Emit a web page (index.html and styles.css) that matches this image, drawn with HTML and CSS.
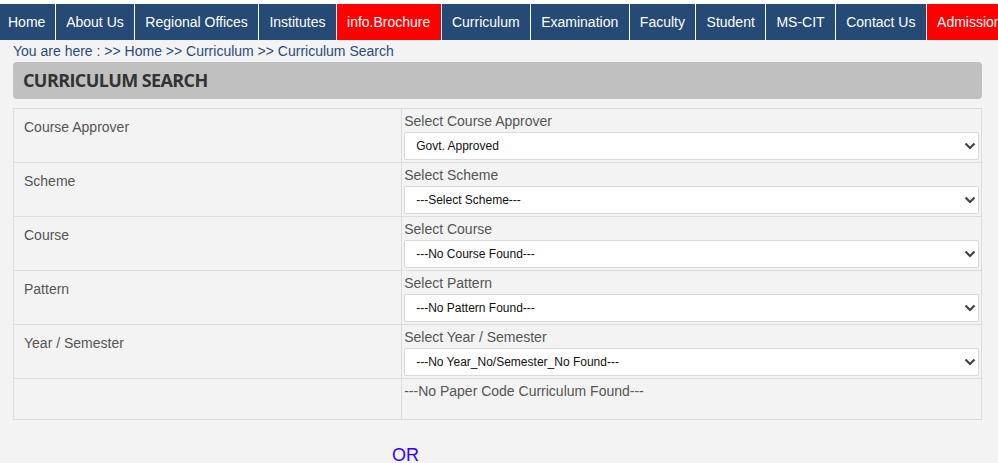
FILE: index.html
```html
<!DOCTYPE html>
<html lang="en">
<head>
<meta charset="utf-8">
<title>Curriculum Search</title>
<link rel="stylesheet" href="styles.css">
</head>
<body>
<div class="top">
  <nav class="nav">
    <a class="nav-item">Home</a>
    <a class="nav-item">About Us</a>
    <a class="nav-item">Regional Offices</a>
    <a class="nav-item">Institutes</a>
    <a class="nav-item nav-red">info.Brochure</a>
    <a class="nav-item">Curriculum</a>
    <a class="nav-item">Examination</a>
    <a class="nav-item">Faculty</a>
    <a class="nav-item">Student</a>
    <a class="nav-item">MS-CIT</a>
    <a class="nav-item">Contact Us</a>
    <a class="nav-item nav-red">Admission</a>
  </nav>
</div>
<main class="content">
  <div class="crumbs">You are here : &gt;&gt; Home &gt;&gt; Curriculum &gt;&gt; Curriculum Search</div>
  <h1 class="heading">CURRICULUM SEARCH</h1>
  <table class="form-table">
    <tr>
      <td class="cell-label">Course Approver</td>
      <td class="cell-field">
        <div class="field-label">Select Course Approver</div>
        <div class="select-wrap">
          <select class="select"><option>Govt. Approved</option></select>
          <svg class="chev" width="12" height="8" viewBox="0 0 12 8"><path d="M1.5 1.5 L6 6 L10.5 1.5" fill="none" stroke="#444" stroke-width="2.2"/></svg>
        </div>
      </td>
    </tr>
    <tr>
      <td class="cell-label">Scheme</td>
      <td class="cell-field">
        <div class="field-label">Select Scheme</div>
        <div class="select-wrap">
          <select class="select"><option>---Select Scheme---</option></select>
          <svg class="chev" width="12" height="8" viewBox="0 0 12 8"><path d="M1.5 1.5 L6 6 L10.5 1.5" fill="none" stroke="#444" stroke-width="2.2"/></svg>
        </div>
      </td>
    </tr>
    <tr>
      <td class="cell-label">Course</td>
      <td class="cell-field">
        <div class="field-label">Select Course</div>
        <div class="select-wrap">
          <select class="select"><option>---No Course Found---</option></select>
          <svg class="chev" width="12" height="8" viewBox="0 0 12 8"><path d="M1.5 1.5 L6 6 L10.5 1.5" fill="none" stroke="#444" stroke-width="2.2"/></svg>
        </div>
      </td>
    </tr>
    <tr>
      <td class="cell-label">Pattern</td>
      <td class="cell-field">
        <div class="field-label">Select Pattern</div>
        <div class="select-wrap">
          <select class="select"><option>---No Pattern Found---</option></select>
          <svg class="chev" width="12" height="8" viewBox="0 0 12 8"><path d="M1.5 1.5 L6 6 L10.5 1.5" fill="none" stroke="#444" stroke-width="2.2"/></svg>
        </div>
      </td>
    </tr>
    <tr>
      <td class="cell-label">Year / Semester</td>
      <td class="cell-field">
        <div class="field-label">Select Year / Semester</div>
        <div class="select-wrap">
          <select class="select"><option>---No Year_No/Semester_No Found---</option></select>
          <svg class="chev" width="12" height="8" viewBox="0 0 12 8"><path d="M1.5 1.5 L6 6 L10.5 1.5" fill="none" stroke="#444" stroke-width="2.2"/></svg>
        </div>
      </td>
    </tr>
    <tr>
      <td class="cell-label"></td>
      <td class="cell-field cell-empty">
        <div class="field-label">---No Paper Code Curriculum Found---</div>
      </td>
    </tr>
  </table>
  <div class="or">OR</div>
</main>
</body>
</html>
```
FILE: styles.css
```css
* { box-sizing: border-box; }
html, body { margin: 0; padding: 0; }
body {
  background: #f3f3f3;
  font-family: "Liberation Sans", Arial, Helvetica, sans-serif;
  font-size: 14px;
  overflow: hidden;
}
.top {
  background: #fff;
  padding-top: 4px;
}
.nav {
  display: flex;
  height: 36px;
  background: #244a75;
  white-space: nowrap;
  overflow: hidden;
}
.nav-item {
  flex: none;
  padding: 0 10.3px;
  line-height: 36px;
  color: #fff;
  font-size: 14px;
  border-right: 1px solid #fff;
}
.nav-item:first-child {
  padding: 0 9.5px 0 8px;
}
.nav-red { background: #f00; }
.content {
  padding: 0 16px 0 13px;
}
.crumbs {
  margin-top: 1px;
  line-height: 20px;
  color: #2b4b78;
  font-size: 14px;
}
.heading {
  margin: 1px 0 0;
  height: 37px;
  line-height: 36px;
  padding-left: 10px;
  background: #c0c0c0;
  border-radius: 4px;
  font-family: "Open Sans", sans-serif;
  font-weight: 700;
  font-size: 18px;
  letter-spacing: -0.6px;
  color: #333;
}
.form-table {
  margin-top: 9px;
  width: 100%;
  border-collapse: collapse;
  background: #f3f3f3;
}
.form-table td {
  border: 1px solid #dcdcdc;
  vertical-align: top;
  color: #555;
  font-size: 14px;
  line-height: 20px;
}
.cell-label {
  width: 40.1%;
  padding: 8px 10px 6px;
}
.cell-field {
  padding: 2px 2px 2px 2px;
}
.cell-empty {
  height: 41px;
}
.field-label {
  line-height: 20px;
}
.select-wrap {
  position: relative;
  margin-top: 1px;
}
.select {
  display: block;
  width: 100%;
  height: 28px;
  margin: 0;
  padding: 0 30px 0 11px;
  -webkit-appearance: none;
  appearance: none;
  background: #fff;
  border: 1px solid #d9d9d9;
  border-radius: 2px;
  font-family: "Liberation Sans", Arial, sans-serif;
  font-size: 12px;
  color: #111;
}
.chev {
  position: absolute;
  right: 3px;
  top: 10px;
}
.or {
  margin-top: 25px;
  padding-left: 379px;
  font-size: 18px;
  color: #3300ff;
}
```
